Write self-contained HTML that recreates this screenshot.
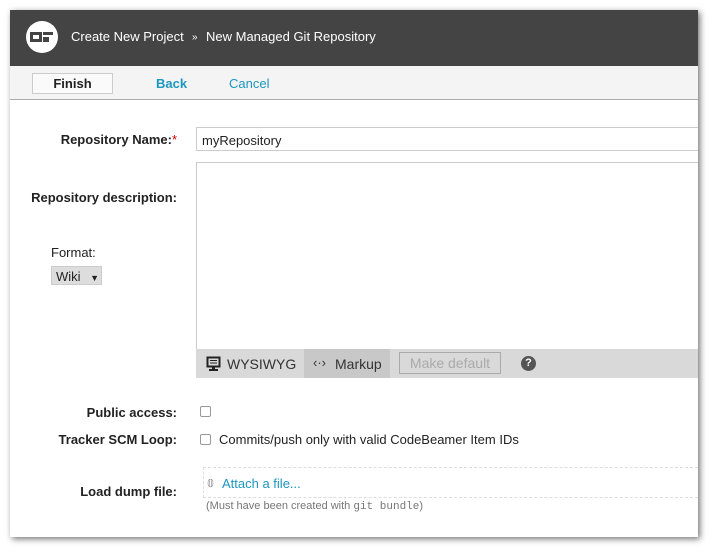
<!DOCTYPE html>
<html><head><style>
*{margin:0;padding:0;box-sizing:border-box}
body{width:714px;height:552px;background:#fff;font-family:"Liberation Sans",sans-serif;position:relative;overflow:hidden}
.win{position:absolute;left:10px;top:10px;width:688px;height:527px;background:#fff;box-shadow:2px 2px 6px rgba(0,0,0,.55);overflow:hidden}
.hdr{position:absolute;left:0;top:0;width:100%;height:56px;background:#444}
.logo{position:absolute;left:16px;top:11px;width:32px;height:32px;border-radius:50%;background:#fff}
.hdr .t{position:absolute;top:19px;color:#fff;font-size:13px}
.tb{position:absolute;left:0;top:56px;width:100%;height:34px;background:#f4f4f4;border-bottom:1px solid #aaa}
.btn{position:absolute;left:22px;top:7px;width:81px;height:21px;border:1px solid #ccc;background:#fafafa;font-weight:bold;font-size:13px;text-align:center;line-height:19px;color:#222}
.lnk{position:absolute;top:10px;font-size:13px;color:#1c97c0}
.lbl{position:absolute;font-size:13px;font-weight:bold;color:#222;text-align:right}
.abs{position:absolute}
</style></head><body>
<div class="win">
<div class="hdr">
 <div class="logo">
  <div class="abs" style="left:4px;top:11px;width:12px;height:10px;border:3px solid #444"></div>
  <div class="abs" style="left:17px;top:11px;width:10px;height:3px;background:#444"></div>
  <div class="abs" style="left:17px;top:16px;width:6px;height:5px;background:#444"></div>
 </div>
 <div class="t" style="left:61px">Create New Project</div>
 <div class="t" style="left:182px;font-size:10px;top:22px">»</div>
 <div class="t" style="left:196px">New Managed Git Repository</div>
</div>
<div class="tb">
 <div class="btn">Finish</div>
 <div class="lnk" style="left:146px;font-weight:bold">Back</div>
 <div class="lnk" style="left:219px">Cancel</div>
</div>
<div class="lbl" style="left:0;width:167px;top:122px">Repository Name:<span style="color:#c00;font-weight:normal">*</span></div>
<div class="abs" style="left:186px;top:117px;width:510px;height:24px;border:1px solid #ccc;font-size:13px;padding:5px 0 0 5px;color:#222">myRepository</div>
<div class="lbl" style="left:0;width:167px;top:180px">Repository description:</div>
<div class="abs" style="left:41px;top:235px;font-size:13px;color:#222">Format:</div>
<div class="abs" style="left:41px;top:256px;width:51px;height:19px;background:#ddd;border:1px solid #ccc;font-size:13px;padding:2px 0 0 4px;color:#222">Wiki <span style="font-size:9px;margin-left:6px">▼</span></div>
<div class="abs" style="left:186px;top:152px;width:510px;height:188px;border:1px solid #ccc"></div>
<div class="abs" style="left:186px;top:339px;width:510px;height:29px;background:#d9d9d9">
 <svg class="abs" style="left:10px;top:7px" width="15" height="15" viewBox="0 0 15 15"><rect x="1.5" y="1.5" width="12" height="9" fill="none" stroke="#222" stroke-width="2"/><rect x="4" y="4" width="7" height="1" fill="#222"/><rect x="4" y="6.5" width="7" height="1" fill="#222"/><rect x="6" y="11" width="3" height="2" fill="#222"/><rect x="3" y="13" width="9" height="2" fill="#222"/></svg>
 <div class="abs" style="left:31px;top:7px;font-size:14px;color:#333">WYSIWYG</div>
 <div class="abs" style="left:108px;top:0;width:86px;height:29px;background:#c8c8c8"></div>
 <div class="abs" style="left:117px;top:6px;font-size:13px;color:#333">‹·›</div>
 <div class="abs" style="left:139px;top:7px;font-size:14px;color:#333">Markup</div>
 <div class="abs" style="left:203px;top:3px;width:102px;height:22px;border:1px solid #aaa;font-size:14px;color:#aaa;text-align:center;line-height:20px">Make default</div>
 <div class="abs" style="left:325px;top:7px;width:15px;height:15px;border-radius:50%;background:#555;color:#fff;font-size:11px;font-weight:bold;text-align:center;line-height:15px">?</div>
</div>
<div class="lbl" style="left:0;width:167px;top:395px">Public access:</div>
<div class="abs" style="left:190px;top:396px;width:11px;height:11px;border:1px solid #999;border-radius:2px"></div>
<div class="lbl" style="left:0;width:167px;top:422px">Tracker SCM Loop:</div>
<div class="abs" style="left:190px;top:424px;width:11px;height:11px;border:1px solid #999;border-radius:2px"></div>
<div class="abs" style="left:209px;top:422px;font-size:13px;color:#222">Commits/push only with valid CodeBeamer Item IDs</div>
<div class="lbl" style="left:0;width:167px;top:474px">Load dump file:</div>
<div class="abs" style="left:193px;top:457px;width:500px;height:31px;border:1px dashed #ddd"></div>
<div class="abs" style="left:197px;top:467px;font-size:11px;color:#888">𝟘</div>
<div class="abs" style="left:212px;top:466px;font-size:13px;color:#1c97c0">Attach a file...</div>
<div class="abs" style="left:196px;top:490px;font-size:11px;color:#777">(Must have been created with <span style="font-family:'Liberation Mono',monospace">git bundle</span>)</div>
</div>
</body></html>
